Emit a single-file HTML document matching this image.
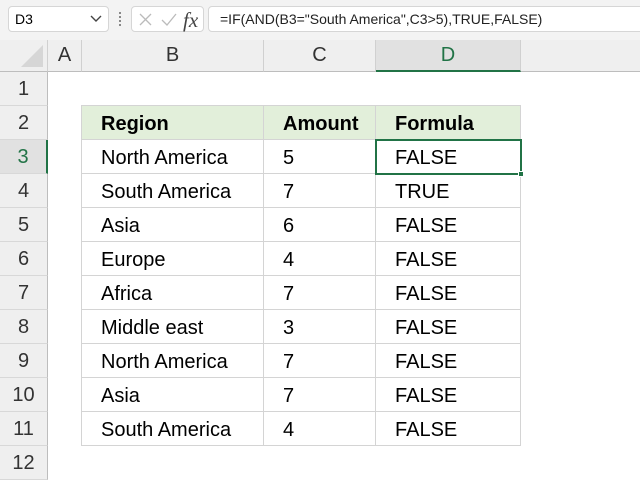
<!DOCTYPE html>
<html><head><style>
*{margin:0;padding:0;box-sizing:border-box}
body{width:640px;height:478px;overflow:hidden;background:#fff;font-family:"Liberation Sans",sans-serif;position:relative}
.top{position:absolute;left:0;top:0;width:640px;height:40px;background:#f3f3f3}
.box{position:absolute;background:#fff;border:1px solid #d6d6d6;border-radius:4px}
.colh{position:absolute;top:40px;height:32px;background:#efefef;border-right:1px solid #d0d0d0;border-bottom:1px solid #bdbdbd;text-align:center;font-size:20px;line-height:31px;color:#333}
.rowh{position:absolute;left:0;width:48px;height:34px;background:#efefef;border-bottom:1px solid #d8d8d8;border-right:1px solid #bdbdbd;text-align:center;font-size:20px;line-height:35px;color:#333}
.c{position:absolute;height:34px;border-right:1px solid #d4d4d4;border-bottom:1px solid #d4d4d4;font-size:20px;line-height:36px;padding-left:19px;color:#000;white-space:nowrap}
.h{background:#e2efda;font-weight:bold}
</style></head><body>
<div class="top"></div>
<div class="box" style="left:8px;top:6px;width:101px;height:26px;font-size:14px;line-height:24px;padding-left:6px">D3<svg style="position:absolute;right:6px;top:8px" width="12" height="8"><path d="M1 1 L6 6 L11 1" stroke="#444" fill="none" stroke-width="1.4"/></svg></div>
<div style="position:absolute;left:119px;top:12px;width:2px;height:14px;border-left:2px dotted #888"></div>
<div class="box" style="left:131px;top:6px;width:73px;height:26px">
<svg width="73" height="26"><path d="M8 7 L19 18 M19 7 L8 18" stroke="#bbb" stroke-width="1.3"/><path d="M30 13 L35 18 L44 7" stroke="#bbb" stroke-width="1.3" fill="none"/><text x="51" y="20" font-family="Liberation Serif" font-style="italic" font-size="21" fill="#444">fx</text></svg></div>
<div class="box" style="left:208px;top:6px;width:440px;height:26px;font-size:14px;line-height:24px;padding-left:11px;color:#222">=IF(AND(B3="South America",C3&gt;5),TRUE,FALSE)</div>

<div class="colh" style="left:0;width:48px"><svg style="position:absolute;left:19px;top:3px" width="26" height="26"><path d="M24 2 L24 24 L2 24 Z" fill="#d6d6d6"/></svg></div>
<div class="colh" style="left:48px;width:34px">A</div>
<div class="colh" style="left:82px;width:182px">B</div>
<div class="colh" style="left:264px;width:112px">C</div>
<div class="colh" style="left:376px;width:145px;background:#e1e1e1;color:#217346;border-bottom:2px solid #217346">D</div>
<div class="colh" style="left:521px;width:119px;border-right:none"></div>

<div class="rowh" style="top:72px">1</div>
<div class="rowh" style="top:106px">2</div>
<div class="rowh" style="top:140px;background:#e1e1e1;color:#217346;border-right:2px solid #217346">3</div>
<div class="rowh" style="top:174px">4</div>
<div class="rowh" style="top:208px">5</div>
<div class="rowh" style="top:242px">6</div>
<div class="rowh" style="top:276px">7</div>
<div class="rowh" style="top:310px">8</div>
<div class="rowh" style="top:344px">9</div>
<div class="rowh" style="top:378px">10</div>
<div class="rowh" style="top:412px">11</div>
<div class="rowh" style="top:446px">12</div>

<div style="position:absolute;left:81px;top:105px;width:440px;height:341px;border-left:1px solid #d4d4d4;border-top:1px solid #d4d4d4"></div>
<div class="c h" style="left:82px;top:106px;width:182px">Region</div>
<div class="c h" style="left:264px;top:106px;width:112px">Amount</div>
<div class="c h" style="left:376px;top:106px;width:145px">Formula</div>

<div class="c" style="left:82px;top:140px;width:182px">North America</div><div class="c" style="left:264px;top:140px;width:112px">5</div><div class="c" style="left:376px;top:140px;width:145px">FALSE</div>
<div class="c" style="left:82px;top:174px;width:182px">South America</div><div class="c" style="left:264px;top:174px;width:112px">7</div><div class="c" style="left:376px;top:174px;width:145px">TRUE</div>
<div class="c" style="left:82px;top:208px;width:182px">Asia</div><div class="c" style="left:264px;top:208px;width:112px">6</div><div class="c" style="left:376px;top:208px;width:145px">FALSE</div>
<div class="c" style="left:82px;top:242px;width:182px">Europe</div><div class="c" style="left:264px;top:242px;width:112px">4</div><div class="c" style="left:376px;top:242px;width:145px">FALSE</div>
<div class="c" style="left:82px;top:276px;width:182px">Africa</div><div class="c" style="left:264px;top:276px;width:112px">7</div><div class="c" style="left:376px;top:276px;width:145px">FALSE</div>
<div class="c" style="left:82px;top:310px;width:182px">Middle east</div><div class="c" style="left:264px;top:310px;width:112px">3</div><div class="c" style="left:376px;top:310px;width:145px">FALSE</div>
<div class="c" style="left:82px;top:344px;width:182px">North America</div><div class="c" style="left:264px;top:344px;width:112px">7</div><div class="c" style="left:376px;top:344px;width:145px">FALSE</div>
<div class="c" style="left:82px;top:378px;width:182px">Asia</div><div class="c" style="left:264px;top:378px;width:112px">7</div><div class="c" style="left:376px;top:378px;width:145px">FALSE</div>
<div class="c" style="left:82px;top:412px;width:182px">South America</div><div class="c" style="left:264px;top:412px;width:112px">4</div><div class="c" style="left:376px;top:412px;width:145px">FALSE</div>

<div style="position:absolute;left:375px;top:139px;width:147px;height:36px;border:2px solid #217346"></div>
<div style="position:absolute;left:518px;top:171px;width:6px;height:6px;background:#217346;border:1px solid #fff"></div>
</body></html>
